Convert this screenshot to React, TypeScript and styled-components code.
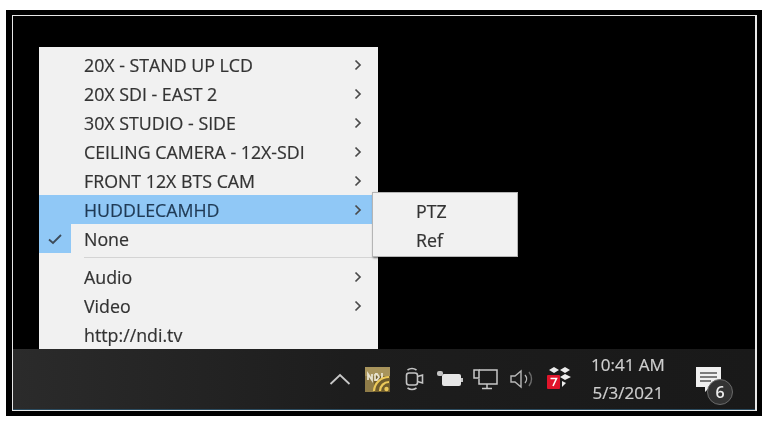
import React from "react";
import styled, { createGlobalStyle } from "styled-components";

const GlobalStyle = createGlobalStyle`
  html, body {
    margin: 0;
    padding: 0;
    background: #fff;
    overflow: hidden;
  }
`;

const Page = styled.div`
  width: 768px;
  height: 423px;
  box-sizing: border-box;
  padding: 10px 6px 7px 6px;
  font-family: "Open Sans", "Noto Sans", sans-serif;
`;

const Frame = styled.div`
  height: 100%;
  box-sizing: border-box;
  border-style: solid;
  border-color: #000;
  border-width: 5px 5px 5px 6px;
  background: #000;
  filter: blur(0.6px);
`;

const Screen = styled.div`
  height: 100%;
  box-sizing: border-box;
  border-style: solid;
  border-color: #e8e8e8;
  border-width: 1px 2px 1px 1px;
  background: #000;
  display: flex;
  flex-direction: column;
`;

const Desktop = styled.div`
  flex: 1;
  min-height: 0;
  padding: 31px 0 0 26px;
`;

const MenuPanel = styled.div`
  position: relative;
  width: 339px;
  height: 302px;
  box-sizing: border-box;
  background: #f1f1f1;
  color: #333;
  font-size: 17.8px;
  -webkit-text-stroke: 0.2px currentColor;
  padding-top: 3px;
  display: flex;
  flex-direction: column;
`;

const Row = styled.div<{ $active?: boolean }>`
  height: 29px;
  flex: none;
  display: flex;
  align-items: center;
  background: ${(p) => (p.$active ? "#90c8f6" : "transparent")};
  color: ${(p) => (p.$active ? "#1f3a55" : "#333")};
`;

const CheckCell = styled.div<{ $checked?: boolean }>`
  width: 32px;
  height: 100%;
  flex: none;
  display: flex;
  align-items: center;
  justify-content: center;
  background: ${(p) => (p.$checked ? "#90c8f6" : "transparent")};
`;

const Label = styled.span`
  flex: 1;
  margin-left: 13px;
  white-space: nowrap;
  line-height: 26px;
`;

const Arrow = styled.svg`
  width: 8px;
  height: 12px;
  margin-right: 16px;
  flex: none;
`;

const Separator = styled.div`
  height: 1px;
  margin: 4px 0 4px 45px;
  background: #d4d4d4;
  flex: none;
`;

const SubMenu = styled.div`
  position: absolute;
  left: 333px;
  top: 145px;
  width: 146px;
  height: 65px;
  box-sizing: border-box;
  padding: 3px 0 0 43px;
  background: #f1f1f1;
  border: 1px solid #b5b5b5;
  box-shadow: 1px 1px 2px rgba(0, 0, 0, 0.5);
  color: #333;
  font-size: 17.8px;
`;

const SubItem = styled.div`
  height: 29px;
  display: flex;
  align-items: center;
`;

const Taskbar = styled.div`
  height: 61px;
  flex: none;
  display: flex;
  align-items: center;
  background: linear-gradient(90deg, #2b2b2b 0%, #1d1d1d 45%, #191919 100%);
  border-bottom: 1px solid #2a4a5e;
  box-sizing: border-box;
`;

const Tray = styled.div`
  margin-left: auto;
  display: flex;
  align-items: center;
`;

const TrayIcon = styled.svg<{ $gap: number }>`
  flex: none;
  margin-right: ${(p) => p.$gap}px;
`;

const Clock = styled.div`
  width: 112px;
  display: flex;
  flex-direction: column;
  align-items: center;
  gap: 8px;
  color: #cfcfcf;
  font-size: 17px;
  line-height: 20px;
  -webkit-text-stroke: 0.2px currentColor;
  white-space: nowrap;
`;

const Notify = styled.div`
  position: relative;
  align-self: flex-start;
  width: 30px;
  height: 38px;
  margin: 18px 29px 0 12px;
`;

const Badge = styled.div`
  position: absolute;
  left: 11px;
  top: 12px;
  width: 26px;
  height: 26px;
  box-sizing: border-box;
  border-radius: 50%;
  background: #333;
  border: 1px solid #6a6a6a;
  color: #eee;
  font-size: 16px;
  font-weight: 600;
  display: flex;
  align-items: center;
  justify-content: center;
`;

const Chevron = () => (
  <Arrow viewBox="0 0 8 12">
    <path d="M1.5 1.5 L6 6 L1.5 10.5" fill="none" stroke="#4a4a4a" strokeWidth="1.7" />
  </Arrow>
);

const items = [
  "20X - STAND UP LCD",
  "20X SDI - EAST 2",
  "30X STUDIO - SIDE",
  "CEILING CAMERA - 12X-SDI",
  "FRONT 12X BTS CAM",
];

const App = () => {
  return (
    <>
      <GlobalStyle />
      <Page>
        <Frame>
          <Screen>
            <Desktop>
              <MenuPanel>
                {items.map((name) => (
                  <Row key={name}>
                    <CheckCell />
                    <Label>{name}</Label>
                    <Chevron />
                  </Row>
                ))}
                <Row $active>
                  <CheckCell />
                  <Label>HUDDLECAMHD</Label>
                  <Chevron />
                </Row>
                <Row>
                  <CheckCell $checked>
                    <svg width="16" height="12" viewBox="0 0 16 12">
                      <path d="M2 6.5 L6 10 L14 2" fill="none" stroke="#3c4a58" strokeWidth="1.8" />
                    </svg>
                  </CheckCell>
                  <Label>None</Label>
                </Row>
                <Separator />
                <Row>
                  <CheckCell />
                  <Label>Audio</Label>
                  <Chevron />
                </Row>
                <Row>
                  <CheckCell />
                  <Label>Video</Label>
                  <Chevron />
                </Row>
                <Row>
                  <CheckCell />
                  <Label>http://ndi.tv</Label>
                </Row>
                <SubMenu>
                  <SubItem>PTZ</SubItem>
                  <SubItem>Ref</SubItem>
                </SubMenu>
              </MenuPanel>
            </Desktop>
            <Taskbar>
              <Tray>
                {/* caret */}
                <TrayIcon $gap={14} width="22" height="12" viewBox="0 0 22 12">
                  <path d="M1.5 11 L11 2 L20.5 11" fill="none" stroke="#c8c8c8" strokeWidth="1.8" />
                </TrayIcon>
                {/* ndi tile */}
                <TrayIcon $gap={15} width="25" height="25" viewBox="0 0 25 25">
                  <rect width="25" height="25" fill="#6f5c2c" />
                  <rect width="25" height="9" fill="#a8945c" />
                  <rect y="9" width="9" height="16" fill="#8f7c48" />
                  <path d="M3 13 V7 L7 13 V7 M10 7 V13 H12 L14 10 L12 7 H10 M17 6 V12" stroke="#e6e0cc" strokeWidth="1.8" fill="none" />
                  <path d="M9 24 A15 15 0 0 1 24 10" stroke="#ecc95a" strokeWidth="2.2" fill="none" />
                  <path d="M15 24 A9 9 0 0 1 24 15" stroke="#ecc95a" strokeWidth="2.2" fill="none" />
                  <circle cx="21.5" cy="22" r="2.2" fill="#ecc95a" />
                </TrayIcon>
                {/* camera */}
                <TrayIcon $gap={13} width="19" height="26" viewBox="0 0 19 26" fill="none" stroke="#c4c4c4" strokeWidth="1.6">
                  <rect x="1.5" y="7" width="11" height="12" rx="2.5" />
                  <path d="M12.5 10.5 L17.5 9 V17 L12.5 15.5" />
                  <path d="M2.5 4 Q7 1 11.5 4 M2.5 22 Q7 25 11.5 22" />
                </TrayIcon>
                {/* battery */}
                <TrayIcon $gap={10} width="26" height="18" viewBox="0 0 26 18">
                  <rect x="5" y="4" width="19" height="12" rx="2" fill="#e6e6e6" />
                  <rect x="24" y="8" width="2" height="4" fill="#c4c4c4" />
                  <rect x="0" y="1" width="6" height="5" rx="2" fill="#c4c4c4" />
                </TrayIcon>
                {/* network */}
                <TrayIcon $gap={12} width="25" height="22" viewBox="0 0 25 22" fill="none" stroke="#c8c8c8" strokeWidth="1.5">
                  <path d="M6 2 H24 V16 H6 V11" />
                  <path d="M14 16 V20 M9 20.5 H19" />
                  <rect x="1" y="2" width="5" height="8" fill="#191919" />
                </TrayIcon>
                {/* speaker */}
                <TrayIcon $gap={12} width="25" height="20" viewBox="0 0 25 20" fill="none" stroke="#b8b8b8" strokeWidth="1.4">
                  <path d="M1 7 H5 L11 2 V18 L5 13 H1 Z" />
                  <path d="M15 6 A6 6 0 0 1 15 14" />
                  <path d="M19 3 A11 11 0 0 1 19 17" stroke="#6c6c6c" />
                </TrayIcon>
                {/* dropbox with red badge */}
                <TrayIcon $gap={0} width="25" height="26" viewBox="0 0 25 26">
                  <path d="M7 1 L12 4 L7 7 L2 4 Z M18 1 L23 4 L18 7 L13 4 Z M18 8 L24 11 L18 14 L13 11 Z" fill="#ececec" />
                  <path d="M15 15 L19 17 L15 21 Z" fill="#ececec" />
                  <rect x="0" y="9" width="13" height="14" rx="1" fill="#e0152b" />
                  <path d="M3.5 12.5 H9.5 L6 20" fill="none" stroke="#fff" strokeWidth="1.6" />
                </TrayIcon>
              </Tray>
              <Clock>
                <span>10:41 AM</span>
                <span>5/3/2021</span>
              </Clock>
              <Notify>
                <svg width="26" height="26" viewBox="0 0 26 26">
                  <path d="M0 0 H25 V20 H14 L9 25 V20 H0 Z" fill="#f0f0f0" />
                  <path d="M4 6 H21 M4 10 H21 M4 14 H15" stroke="#555" strokeWidth="1.5" />
                </svg>
                <Badge>6</Badge>
              </Notify>
            </Taskbar>
          </Screen>
        </Frame>
      </Page>
    </>
  );
};

export default App;
